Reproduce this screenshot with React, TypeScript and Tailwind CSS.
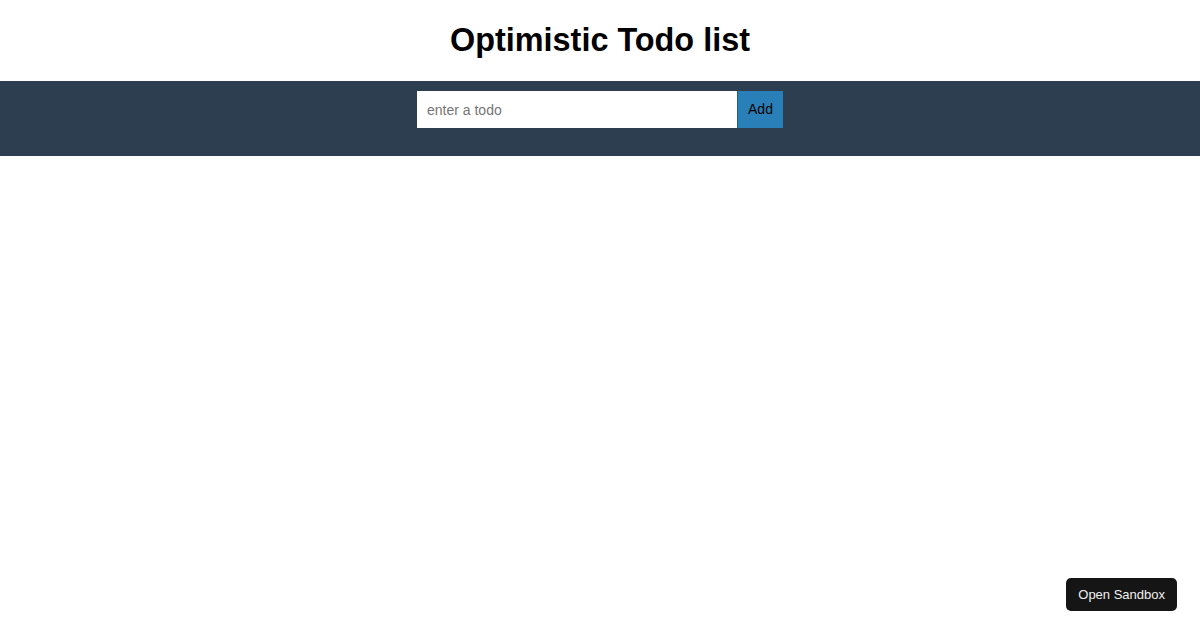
import React from "react";

export default function App() {
  return (
    <div className="min-h-[630px] bg-white relative" style={{ fontFamily: '"Liberation Sans", Arial, sans-serif' }}>
      <h1 className="text-[32.4px] font-bold text-center leading-[37px] py-[22px] text-black">Optimistic Todo list</h1>
      <div className="bg-[#2c3e50] pt-[10px] pb-[28px] flex justify-center">
        <form className="flex" onSubmit={(e) => e.preventDefault()}>
          <input
            placeholder="enter a todo"
            className="w-[320px] h-[37px] bg-white px-[10px] text-[14px] text-black placeholder:text-[#757575] outline-none"
          />
          <button className="h-[37px] w-[46px] bg-[#2980b9] border-l border-[#1f5f8a] text-[14px] text-black">Add</button>
        </form>
      </div>
      <button className="absolute right-[23px] top-[578px] h-[33px] px-[12px] bg-[#151515] rounded-[5px] text-[13px] text-[#f0f0f0]">
        Open Sandbox
      </button>
    </div>
  );
}
